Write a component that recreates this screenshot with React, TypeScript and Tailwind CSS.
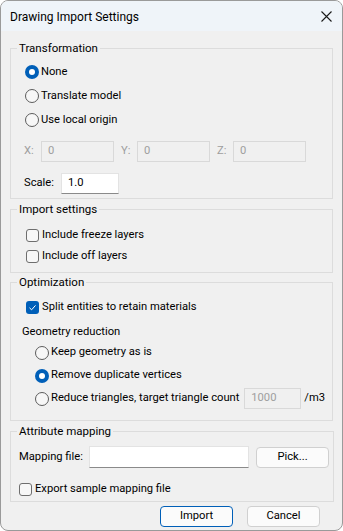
import React from "react";

const font = { fontFamily: 'Roboto, "Liberation Sans", Arial, sans-serif' };

function Radio({ checked }: { checked?: boolean }) {
  return checked ? (
    <span className="flex h-[14px] w-[14px] shrink-0 items-center justify-center rounded-full bg-[#005fb8]">
      <span className="h-[6px] w-[6px] rounded-full bg-white" />
    </span>
  ) : (
    <span className="h-[14px] w-[14px] shrink-0 rounded-full border border-[#5c5c5c] bg-[#f7f7f7]" />
  );
}

function Check({ checked }: { checked?: boolean }) {
  return checked ? (
    <span className="flex h-[13px] w-[13px] shrink-0 items-center justify-center rounded-[3px] bg-[#005fb8]">
      <svg width="9" height="9" viewBox="0 0 9 9">
        <path d="M1.5 4.8 L3.6 6.8 L7.5 2.4" fill="none" stroke="white" strokeWidth="1" />
      </svg>
    </span>
  ) : (
    <span className="h-[13px] w-[13px] shrink-0 rounded-[3px] border border-[#6e6e6e] bg-[#f7f7f7]" />
  );
}

function Group({ title, className, children }: { title: string; className?: string; children: React.ReactNode }) {
  return (
    <fieldset className={`border border-[#dcdcdc] ${className ?? ""}`}>
      <legend className="ml-[6px] px-[2px] text-[11.5px] leading-[16px] text-black">{title}</legend>
      {children}
    </fieldset>
  );
}

function DisabledBox({ value, w }: { value: string; w: string }) {
  return (
    <div className={`flex h-[21px] ${w} items-center border border-[#d9d9d9] bg-[#f0f0f0] pl-[6px] text-[#9e9e9e]`}>
      {value}
    </div>
  );
}

export default function App() {
  return (
    <div style={font} className="h-[531px] w-[343px] overflow-hidden whitespace-nowrap rounded-[8px] border border-[#9a9a9a] bg-[#f0f0f0] text-[11.2px] text-black">
      <div className="flex h-[30px] items-center justify-between bg-[#eff4f9] pl-[9px] pr-[10px]">
        <span className="pt-[1px] text-[12px] text-black">Drawing Import Settings</span>
        <svg width="11" height="11" viewBox="0 0 11 11">
          <path d="M0.5 0.5 L10.5 10.5 M10.5 0.5 L0.5 10.5" stroke="#1a1a1a" strokeWidth="1.1" />
        </svg>
      </div>
      <div className="flex flex-col px-[9px]">
        <Group title="Transformation" className="mt-[9px] pb-[4px]">
          <div className="flex flex-col pl-[14px] pt-[4px]">
            <div className="flex h-[24px] items-center gap-[2px]">
              <Radio checked />
              <span>None</span>
            </div>
            <div className="flex h-[24px] items-center gap-[2px]">
              <Radio />
              <span>Translate model</span>
            </div>
            <div className="flex h-[24px] items-center gap-[2px]">
              <Radio />
              <span>Use local origin</span>
            </div>
          </div>
          <div className="mt-[9px] flex items-center pl-[13px] text-[#9e9e9e]">
            <span className="w-[17px]">X:</span>
            <DisabledBox value="0" w="w-[73px]" />
            <span className="ml-[7px] w-[16px]">Y:</span>
            <DisabledBox value="0" w="w-[73px]" />
            <span className="ml-[7px] w-[16px]">Z:</span>
            <DisabledBox value="0" w="w-[73px]" />
          </div>
          <div className="mt-[11px] flex items-center pl-[13px]">
            <span className="w-[37px]">Scale:</span>
            <div className="flex h-[21px] w-[58px] items-center border border-[#e3e3e3] border-b-[#8a8a8a] bg-white pl-[6px]">1.0</div>
          </div>
        </Group>

        <Group title="Import settings" className="mt-[2px] pb-[5px]">
          <div className="flex flex-col pl-[15px] pt-[8px]">
            <div className="flex h-[21px] items-center gap-[3px]">
              <Check />
              <span>Include freeze layers</span>
            </div>
            <div className="flex h-[21px] items-center gap-[3px]">
              <Check />
              <span>Include off layers</span>
            </div>
          </div>
        </Group>

        <Group title="Optimization" className="mt-[1px] pb-[10px]">
          <div className="flex flex-col pt-[7px]">
            <div className="flex h-[21px] items-center gap-[3px] pl-[15px]">
              <Check checked />
              <span>Split entities to retain materials</span>
            </div>
            <div className="mt-[6px] flex h-[17px] items-center pl-[11px]">Geometry reduction</div>
            <div className="flex h-[23px] items-center gap-[2px] pl-[24px]">
              <Radio />
              <span>Keep geometry as is</span>
            </div>
            <div className="flex h-[23px] items-center gap-[2px] pl-[24px]">
              <Radio checked />
              <span>Remove duplicate vertices</span>
            </div>
            <div className="flex h-[23px] items-center gap-[2px] pl-[24px]">
              <Radio />
              <span>Reduce triangles, target triangle count</span>
              <div className="ml-auto flex items-center gap-[3px] pr-[7px]">
                <DisabledBox value="1000" w="w-[57px]" />
                <span>/m3</span>
              </div>
            </div>
          </div>
        </Group>

        <Group title="Attribute mapping" className="mt-[2px] pb-[2px]">
          <div className="flex items-center pl-[8px] pr-[4px] pt-[7px]">
            <span className="w-[70px]">Mapping file:</span>
            <div className="h-[22px] w-[160px] border border-[#e3e3e3] border-b-[#8a8a8a] bg-white" />
            <button className="ml-[7px] flex h-[21px] w-[73px] items-center justify-center rounded-[4px] border border-[#d0d0d0] bg-[#fbfbfb]">
              Pick...
            </button>
          </div>
          <div className="mt-[11px] flex h-[20px] items-center gap-[3px] pl-[8px]">
            <Check />
            <span>Export sample mapping file</span>
          </div>
        </Group>

        <div className="mt-[4px] flex justify-end gap-[14px] pr-[13px]">
          <button className="flex h-[21px] w-[73px] items-center justify-center rounded-[4px] border border-[#005fb8] bg-[#fbfbfb]">
            Import
          </button>
          <button className="flex h-[21px] w-[73px] items-center justify-center rounded-[4px] border border-[#d0d0d0] bg-[#fbfbfb]">
            Cancel
          </button>
        </div>
      </div>
    </div>
  );
}
